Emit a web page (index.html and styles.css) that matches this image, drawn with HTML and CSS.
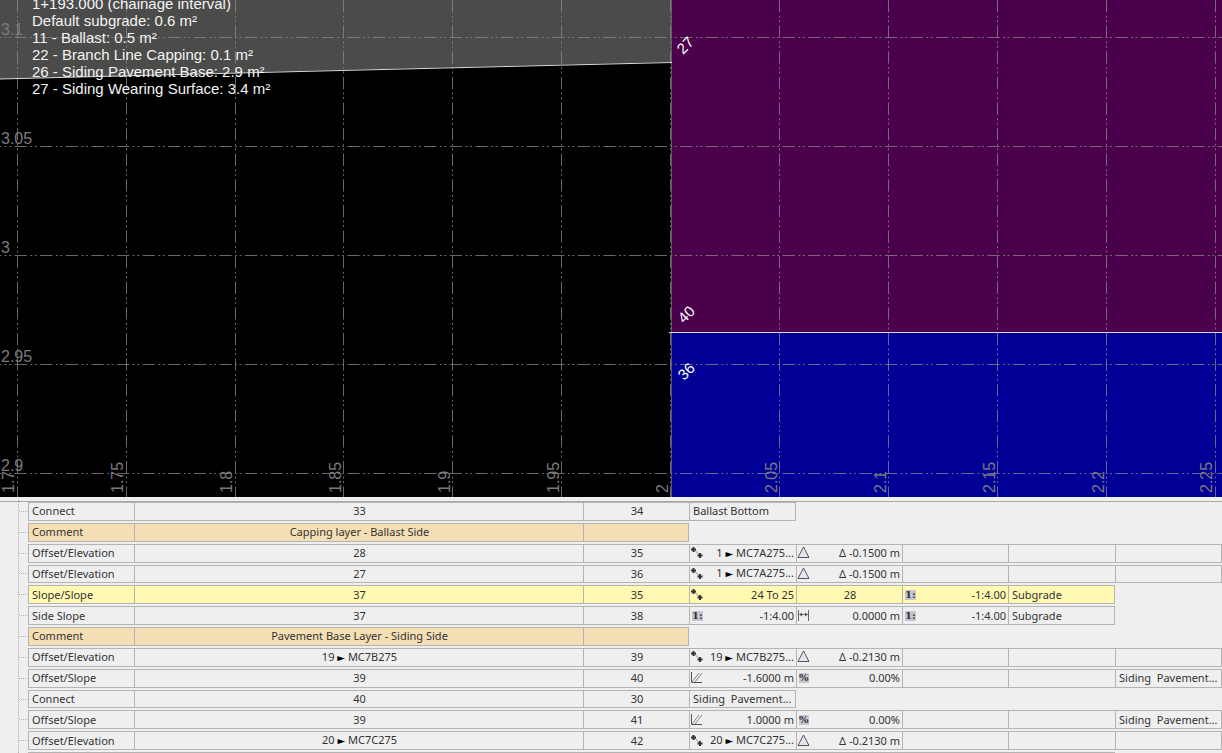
FILE: index.html
```html
<!DOCTYPE html>
<html lang="en">
<head>
    <meta charset="UTF-8">
    <meta name="viewport" content="width=device-width, initial-scale=1.0">
    <title>Cross Section Template</title>
    <link rel="stylesheet" href="styles.css">
</head>
<body>
    <!-- shared cell icons -->
    <svg class="defs" width="0" height="0" aria-hidden="true">
        <symbol id="points" viewBox="0 0 14 14">
            <path d="M4 3.5 L10 9.5" stroke="#888" fill="none"/>
            <path d="M1 3.5H6M3.5 1V6M7.5 9.5H12.5M10 7V12" stroke="#333" stroke-width="2" fill="none"/>
        </symbol>
        <symbol id="delta" viewBox="0 0 14 14">
            <path d="M6.5 1 L12 11.5 H1 Z" stroke="#555562" fill="#e6e6f2"/>
        </symbol>
        <symbol id="width" viewBox="0 0 14 14">
            <path d="M1.5 1V12M11.5 1V12M3 5.5H10" stroke="#666" fill="none"/>
            <path d="M2 5.5L5 3.5V7.5ZM11 5.5L8 3.5V7.5Z" fill="#555"/>
        </symbol>
        <symbol id="slope" viewBox="0 0 14 14">
            <path d="M1.5 1V11.5H12" stroke="#555" fill="none"/>
            <path d="M2 11L9 2M5 11L12 2" stroke="#888" fill="none"/>
        </symbol>
    </svg>

    <main class="section-view">
        <svg class="plot" viewBox="0 0 1222 497" role="img" aria-label="Cross section at chainage 1+193.000">
            <rect width="1222" height="497" fill="#000"/>
            <path d="M0 0H671V62L300 71L0 79Z" fill="#4b4b49"/>
            <rect x="671" width="551" height="332" fill="#4b004b"/>
            <rect x="671" y="332" width="551" height="165" fill="#000096"/>

            <g class="grid">
                <path class="grid-v" d="M17.5 0V497M126.5 0V497M235.5 0V497M343.5 0V497M452.5 0V497M561.5 0V497M670.5 0V497M779.5 0V497M888.5 0V497M997.5 0V497M1106.5 0V497M1215.5 0V497"/>
                <path class="grid-h" d="M0 37.5H1222M0 146.5H1222M0 255.5H1222M0 364.5H1222M0 473.5H1222"/>
            </g>

            <path class="edge" d="M671.5 0V497"/>
            <path class="surface" d="M0 79L300 71.5L672 62.5"/>
            <path class="surface" d="M669 332.5H1222"/>

            <g class="axis">
                <text x="1" y="35">3.1</text>
                <text x="1" y="144">3.05</text>
                <text x="1" y="253">3</text>
                <text x="1" y="362">2.95</text>
                <text x="1" y="471">2.9</text>
                <text transform="translate(14 493) rotate(-90)">1.7</text>
                <text transform="translate(123 493) rotate(-90)">1.75</text>
                <text transform="translate(232 493) rotate(-90)">1.8</text>
                <text transform="translate(341 493) rotate(-90)">1.85</text>
                <text transform="translate(450 493) rotate(-90)">1.9</text>
                <text transform="translate(559 493) rotate(-90)">1.95</text>
                <text transform="translate(668 493) rotate(-90)">2</text>
                <text transform="translate(777 493) rotate(-90)">2.05</text>
                <text transform="translate(886 493) rotate(-90)">2.1</text>
                <text transform="translate(995 493) rotate(-90)">2.15</text>
                <text transform="translate(1104 493) rotate(-90)">2.2</text>
                <text transform="translate(1212 493) rotate(-90)">2.25</text>
            </g>

            <g class="node">
                <text transform="translate(689 49) rotate(-45)">27</text>
                <text transform="translate(690 318) rotate(-45)">40</text>
                <text transform="translate(690 375) rotate(-45)">36</text>
            </g>

            <g class="info">
                <text x="32" y="9">1+193.000 (chainage interval)</text>
                <text x="32" y="26">Default subgrade: 0.6 m²</text>
                <text x="32" y="43">11 - Ballast: 0.5 m²</text>
                <text x="32" y="60">22 - Branch Line Capping: 0.1 m²</text>
                <text x="32" y="77">26 - Siding Pavement Base: 2.9 m²</text>
                <text x="32" y="94">27 - Siding Wearing Surface: 3.4 m²</text>
            </g>
        </svg>
    </main>

    <section class="elements">
        <table>
            <colgroup>
                <col class="tree"><col class="a"><col><col class="a"><col class="b"><col class="a"><col class="a"><col class="b"><col class="b">
            </colgroup>
            <tbody>
                <tr>
                    <td class="branch"></td><td>Connect</td><td class="mid">33</td><td class="mid">34</td>
                    <td class="last">Ballast Bottom</td>
                </tr>
                <tr class="comment">
                    <td class="branch"></td><td>Comment</td><td class="mid">Capping layer - Ballast Side</td><td class="last"></td>
                </tr>
                <tr>
                    <td class="branch"></td><td>Offset/Elevation</td><td class="mid">28</td><td class="mid">35</td>
                    <td><div class="val"><svg><use href="#points"/></svg><span>1 <i>►</i> MC7A275...</span></div></td>
                    <td><div class="val"><svg><use href="#delta"/></svg><span>Δ -0.1500 m</span></div></td>
                    <td></td><td></td><td class="last"></td>
                </tr>
                <tr>
                    <td class="branch"></td><td>Offset/Elevation</td><td class="mid">27</td><td class="mid">36</td>
                    <td><div class="val"><svg><use href="#points"/></svg><span>1 <i>►</i> MC7A275...</span></div></td>
                    <td><div class="val"><svg><use href="#delta"/></svg><span>Δ -0.1500 m</span></div></td>
                    <td></td><td></td><td class="last"></td>
                </tr>
                <tr class="selected">
                    <td class="branch"></td><td>Slope/Slope</td><td class="mid">37</td><td class="mid">35</td>
                    <td><div class="val"><svg><use href="#points"/></svg><span>24 To 25</span></div></td>
                    <td class="mid">28</td>
                    <td><div class="val"><b>1:</b><span>-1:4.00</span></div></td>
                    <td class="last">Subgrade</td>
                </tr>
                <tr>
                    <td class="branch"></td><td>Side Slope</td><td class="mid">37</td><td class="mid">38</td>
                    <td><div class="val"><b>1:</b><span>-1:4.00</span></div></td>
                    <td><div class="val"><svg><use href="#width"/></svg><span>0.0000 m</span></div></td>
                    <td><div class="val"><b>1:</b><span>-1:4.00</span></div></td>
                    <td class="last">Subgrade</td>
                </tr>
                <tr class="comment">
                    <td class="branch"></td><td>Comment</td><td class="mid">Pavement Base Layer - Siding Side</td><td class="last"></td>
                </tr>
                <tr>
                    <td class="branch"></td><td>Offset/Elevation</td><td class="mid">19 <i>►</i> MC7B275</td><td class="mid">39</td>
                    <td><div class="val"><svg><use href="#points"/></svg><span>19 <i>►</i> MC7B275...</span></div></td>
                    <td><div class="val"><svg><use href="#delta"/></svg><span>Δ -0.2130 m</span></div></td>
                    <td></td><td></td><td class="last"></td>
                </tr>
                <tr>
                    <td class="branch"></td><td>Offset/Slope</td><td class="mid">39</td><td class="mid">40</td>
                    <td><div class="val"><svg><use href="#slope"/></svg><span>-1.6000 m</span></div></td>
                    <td><div class="val"><b>%</b><span>0.00%</span></div></td>
                    <td></td><td></td><td class="last">Siding&nbsp; Pavement...</td>
                </tr>
                <tr>
                    <td class="branch"></td><td>Connect</td><td class="mid">40</td><td class="mid">30</td>
                    <td class="last">Siding&nbsp; Pavement...</td>
                </tr>
                <tr>
                    <td class="branch"></td><td>Offset/Slope</td><td class="mid">39</td><td class="mid">41</td>
                    <td><div class="val"><svg><use href="#slope"/></svg><span>1.0000 m</span></div></td>
                    <td><div class="val"><b>%</b><span>0.00%</span></div></td>
                    <td></td><td></td><td class="last">Siding&nbsp; Pavement...</td>
                </tr>
                <tr>
                    <td class="branch"></td><td>Offset/Elevation</td><td class="mid">20 <i>►</i> MC7C275</td><td class="mid">42</td>
                    <td><div class="val"><svg><use href="#points"/></svg><span>20 <i>►</i> MC7C275...</span></div></td>
                    <td><div class="val"><svg><use href="#delta"/></svg><span>Δ -0.2130 m</span></div></td>
                    <td></td><td></td><td class="last"></td>
                </tr>
                <tr>
                    <td class="branch"></td><td></td><td></td><td></td><td></td><td></td><td></td><td class="last"></td>
                </tr>
            </tbody>
        </table>
    </section>
</body>
</html>
```

FILE: styles.css
```css
* {
    margin: 0;
    padding: 0;
    box-sizing: border-box;
}
body {
    height: 100vh;
    overflow: hidden;
    background-color: #efefef;
    color: #333;
    font-family: "Noto Sans", sans-serif;
    font-size: 11px;
    line-height: 14px;
}
.defs {
    position: absolute;
}

/* cross section plot */
.plot {
    display: block;
    width: 100%;
    font-family: "Liberation Sans", Arial, sans-serif;
}
.grid path {
    fill: none;
    stroke: #8a8a8a;
    stroke-opacity: 0.75;
    stroke-dasharray: 12.4 3.4 2 2.4 2 3.4;
}
.grid .grid-h {
    stroke-dashoffset: 11.1;
}
.edge {
    stroke: #777;
    stroke-opacity: 0.7;
}
.surface {
    fill: none;
    stroke: #d8d8e0;
}
.axis text {
    font-size: 16px;
    fill: #7c7a80;
}
.node text {
    font-size: 15px;
    fill: #fff;
    text-anchor: middle;
}
.info text {
    font-size: 15px;
    fill: #f4f4f4;
}

/* element list */
.elements {
    margin-top: 4px;
    padding-left: 18px;
    border-top: 1px solid #a8a8a8;
}
table {
    width: 100%;
    height: 273px;
    margin-top: -2px;
    table-layout: fixed;
    border-collapse: separate;
    border-spacing: 0 2px;
    border-left: 1px dotted #b0b0b0;
}
.tree {
    width: 9px;
}
.a {
    width: 106px;
}
.b {
    width: 107px;
}
td {
    height: 18px;
    padding: 0 2px 0 3px;
    border: 1px solid #b4b4b4;
    border-right: 0;
    white-space: nowrap;
    overflow: hidden;
    line-height: 14px;
}
td.last {
    border-right: 1px solid #b4b4b4;
}
td.mid {
    text-align: center;
}
td.branch {
    padding: 0;
    border: 0;
    background: repeating-linear-gradient(to right, #b8b8b8 0 1px, transparent 1px 2px) center / 100% 1px no-repeat;
}
.comment td:not(.branch) {
    background-color: #f4deb3;
}
.selected td:not(.branch) {
    background-color: #fff9b2;
}
.val {
    display: flex;
    align-items: center;
    justify-content: space-between;
    margin-left: -3px;
}
.val svg {
    flex: none;
    width: 14px;
    height: 14px;
}
.val b {
    margin-left: 2px;
    background-color: #c6c6d0;
    font-family: "DejaVu Serif", serif;
    font-size: 10px;
    line-height: 10px;
}
i {
    color: #000;
    font-family: "DejaVu Sans", sans-serif;
    font-size: 10px;
    font-style: normal;
}
```
